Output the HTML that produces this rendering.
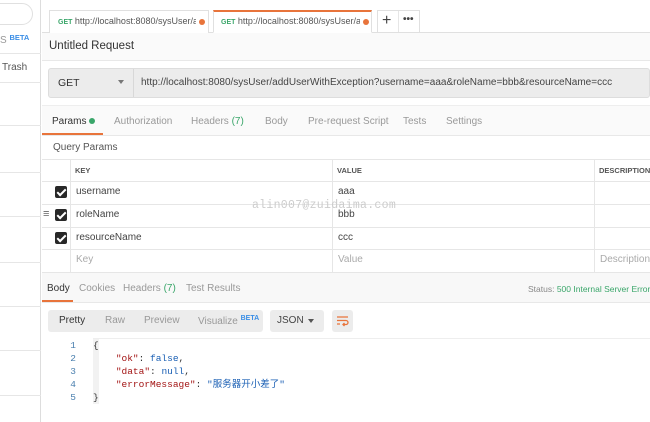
<!DOCTYPE html>
<html><head><meta charset="utf-8"><style>
*{margin:0;padding:0;box-sizing:border-box}
body{width:650px;height:422px;overflow:hidden;background:#fff;font-family:"Liberation Sans","Noto Sans CJK SC",sans-serif;font-size:10px;color:#333;position:relative}
.a{position:absolute}
.hl{position:absolute;height:1px;background:#e6e6e6}
.vl{position:absolute;width:1px;background:#e6e6e6}
.g{color:#999}
.cb{position:absolute;width:12px;height:12px;background:#282828;border-radius:2px;left:55px}
.cb:after{content:"";position:absolute;left:4px;top:1px;width:3px;height:7px;border:solid #fff;border-width:0 2px 2px 0;transform:rotate(45deg)}
.code{font-family:"Liberation Mono","Noto Sans CJK SC",monospace;font-size:9.5px}
</style></head><body>
<div class="a" style="left:0;top:0;width:41px;height:422px;background:#fff;border-right:1px solid #ddd"></div>
<div class="a" style="left:-20px;top:3px;width:53px;height:22px;border:1px solid #e0e0e0;border-radius:11px"></div>
<div class="a g" style="left:0;top:33px;font-size:10px">S <span style="color:#3a8ee6;font-size:7.5px;vertical-align:3px;font-weight:bold">BETA</span></div>
<div class="hl" style="left:0;top:53px;width:41px"></div>
<div class="a" style="left:2px;top:62px;font-size:10px;color:#555">Trash</div>
<div class="hl" style="left:0;top:82px;width:41px"></div>
<div class="hl" style="left:0;top:125px;width:41px"></div>
<div class="hl" style="left:0;top:172px;width:41px"></div>
<div class="hl" style="left:0;top:216px;width:41px"></div>
<div class="hl" style="left:0;top:262px;width:41px"></div>
<div class="hl" style="left:0;top:306px;width:41px"></div>
<div class="hl" style="left:0;top:350px;width:41px"></div>
<div class="hl" style="left:0;top:395px;width:41px"></div>
<div class="a" style="left:42px;top:32px;width:608px;height:1px;background:#e0e0e0"></div>
<div class="a" style="left:49px;top:10px;width:160px;height:23px;border:1px solid #e0e0e0;border-bottom:none;background:#fff"></div>
<div class="a" style="left:58px;top:16px;font-size:9px;white-space:nowrap;width:138px;overflow:hidden"><span style="color:#3aa66a;font-size:7px;font-weight:bold">GET</span> <span style="color:#555">http://localhost:8080/sysUser/a...</span></div>
<div class="a" style="left:199px;top:19px;width:6px;height:6px;border-radius:50%;background:#e8743b"></div>
<div class="a" style="left:213px;top:10px;width:159px;height:23px;border:1px solid #e0e0e0;border-top:2px solid #e8743b;border-bottom:1px solid #fff;background:#fff"></div>
<div class="a" style="left:221px;top:16px;font-size:9px;white-space:nowrap;width:139px;overflow:hidden"><span style="color:#3aa66a;font-size:7px;font-weight:bold">GET</span> <span style="color:#555">http://localhost:8080/sysUser/a...</span></div>
<div class="a" style="left:363px;top:19px;width:6px;height:6px;border-radius:50%;background:#e8743b"></div>
<div class="a" style="left:377px;top:10px;width:43px;height:23px;border:1px solid #e0e0e0;border-bottom:none"></div>
<div class="vl" style="left:398px;top:11px;height:21px"></div>
<div class="a" style="left:382px;top:12px;font-size:16px;color:#444">+</div>
<div class="a" style="left:403px;top:14px;font-size:10px;color:#444;font-weight:bold">•••</div>
<div class="a" style="left:42px;top:33px;width:608px;height:28px;background:#fafafa;border-bottom:1px solid #e8e8e8"></div>
<div class="a" style="left:49px;top:40px;font-size:11.5px;color:#333">Untitled Request</div>
<div class="a" style="left:48px;top:68px;width:602px;height:30px;background:#ececec;border:1px solid #ddd;border-radius:3px"></div>
<div class="vl" style="left:133px;top:69px;height:28px;background:#d8d8d8"></div>
<div class="a" style="left:58px;top:77px;font-size:10.5px;color:#333">GET</div>
<div class="a" style="left:118px;top:80px;width:0;height:0;border-left:3px solid transparent;border-right:3px solid transparent;border-top:4px solid #777"></div>
<div class="a" style="left:141px;top:77px;font-size:10px;color:#444;white-space:nowrap">http://localhost:8080/sysUser/addUserWithException?username=aaa&amp;roleName=bbb&amp;resourceName=ccc</div>
<div class="a" style="left:42px;top:105px;width:608px;height:31px;background:#fafafa;border-top:1px solid #eee;border-bottom:1px solid #e8e8e8"></div>
<div class="a" style="left:52px;top:116px;font-size:10px;color:#333;white-space:nowrap">Params <span style="display:inline-block;width:6px;height:6px;border-radius:50%;background:#3aa66a"></span></div>
<div class="a" style="left:42px;top:133px;width:61px;height:2px;background:#e8743b"></div>
<div class="a g" style="left:114px;top:116px;font-size:10px">Authorization</div>
<div class="a g" style="left:191px;top:116px;font-size:10px">Headers <span style="color:#3aa66a">(7)</span></div>
<div class="a g" style="left:265px;top:116px;font-size:10px">Body</div>
<div class="a g" style="left:308px;top:116px;font-size:10px">Pre-request Script</div>
<div class="a g" style="left:403px;top:116px;font-size:10px">Tests</div>
<div class="a g" style="left:446px;top:116px;font-size:10px">Settings</div>
<div class="a" style="left:53px;top:142px;font-size:10px;color:#555">Query Params</div>
<div class="hl" style="left:42px;top:159px;width:608px"></div>
<div class="hl" style="left:42px;top:181px;width:608px"></div>
<div class="hl" style="left:42px;top:204px;width:608px"></div>
<div class="hl" style="left:42px;top:227px;width:608px"></div>
<div class="hl" style="left:42px;top:249px;width:608px"></div>
<div class="hl" style="left:42px;top:272px;width:608px"></div>
<div class="vl" style="left:70px;top:159px;height:113px"></div>
<div class="vl" style="left:332px;top:159px;height:113px"></div>
<div class="vl" style="left:594px;top:159px;height:113px"></div>
<div class="a" style="left:75px;top:166px;font-size:7.5px;font-weight:bold;color:#555">KEY</div>
<div class="a" style="left:337px;top:166px;font-size:7.5px;font-weight:bold;color:#555">VALUE</div>
<div class="a" style="left:599px;top:166px;font-size:7.5px;font-weight:bold;color:#555">DESCRIPTION</div>
<div class="cb" style="top:186px"></div><div class="a" style="left:76px;top:186px;font-size:10px;color:#444">username</div><div class="a" style="left:338px;top:186px;font-size:10px;color:#444">aaa</div>
<div class="a" style="left:43px;top:208px;font-size:11px;color:#666">≡</div>
<div class="cb" style="top:209px"></div><div class="a" style="left:76px;top:209px;font-size:10px;color:#444">roleName</div><div class="a" style="left:338px;top:209px;font-size:10px;color:#444">bbb</div>
<div class="cb" style="top:232px"></div><div class="a" style="left:76px;top:232px;font-size:10px;color:#444">resourceName</div><div class="a" style="left:338px;top:232px;font-size:10px;color:#444">ccc</div>
<div class="a" style="left:76px;top:254px;font-size:10px;color:#aaa">Key</div><div class="a" style="left:338px;top:254px;font-size:10px;color:#aaa">Value</div><div class="a" style="left:600px;top:254px;font-size:10px;color:#aaa">Description</div>
<div class="a" style="left:252px;top:199px;font-family:'Liberation Mono',monospace;font-size:11.5px;color:#ccc;letter-spacing:0.3px">alin007@zuidaima.com</div>
<div class="a" style="left:42px;top:273px;width:608px;height:30px;background:#f8f8f8;border-bottom:1px solid #e8e8e8"></div>
<div class="a" style="left:47px;top:283px;font-size:10px;color:#333">Body</div>
<div class="a" style="left:42px;top:300px;width:31px;height:2px;background:#e8743b"></div>
<div class="a g" style="left:79px;top:283px;font-size:10px">Cookies</div>
<div class="a g" style="left:123px;top:283px;font-size:10px">Headers <span style="color:#3aa66a">(7)</span></div>
<div class="a g" style="left:186px;top:283px;font-size:10px">Test Results</div>
<div class="a" style="left:528px;top:284px;font-size:8.5px;color:#888;white-space:nowrap">Status: <span style="color:#3aa66a">500 Internal Server Error</span></div>
<div class="a" style="left:48px;top:310px;width:215px;height:22px;background:#ececec;border-radius:3px"></div>
<div class="a" style="left:59px;top:315px;font-size:10px;color:#333">Pretty</div>
<div class="a g" style="left:105px;top:315px;font-size:10px">Raw</div>
<div class="a g" style="left:144px;top:315px;font-size:10px">Preview</div>
<div class="a g" style="left:198px;top:315px;font-size:10px">Visualize <span style="color:#3a8ee6;font-size:7px;font-weight:bold;vertical-align:4px">BETA</span></div>
<div class="a" style="left:270px;top:310px;width:54px;height:22px;background:#ececec;border-radius:3px"></div>
<div class="a" style="left:277px;top:315px;font-size:10px;color:#444">JSON</div>
<div class="a" style="left:308px;top:319px;width:0;height:0;border-left:3px solid transparent;border-right:3px solid transparent;border-top:4px solid #555"></div>
<div class="a" style="left:332px;top:310px;width:21px;height:22px;background:#ececec;border-radius:3px"></div>
<svg class="a" style="left:336px;top:314px" width="13" height="13" viewBox="0 0 13 13" fill="none" stroke="#e8743b" stroke-width="1.3"><path d="M1 3h11M1 6.5h9a2 2 0 0 1 0 4H7M8.5 9l-1.5 1.5 1.5 1.5M1 10h3"/></svg>
<div class="hl" style="left:93px;top:338px;width:557px;background:#eee"></div>
<div class="a" style="left:93px;top:339px;width:6px;height:65px;background:#f2f2f2"></div>
<div class="a code" style="left:66px;top:339px;line-height:13px;color:#4a7fae;text-align:right;width:10px">1<br>2<br>3<br>4<br>5</div>
<div class="a code" style="left:93px;top:339px;line-height:13px;color:#333;white-space:pre">{
    <span style="color:#a31515">"ok"</span>: <span style="color:#1a5fb4">false</span>,
    <span style="color:#a31515">"data"</span>: <span style="color:#1a5fb4">null</span>,
    <span style="color:#a31515">"errorMessage"</span>: <span style="color:#1a5fb4">"服务器开小差了"</span>
}</div>
</body></html>
